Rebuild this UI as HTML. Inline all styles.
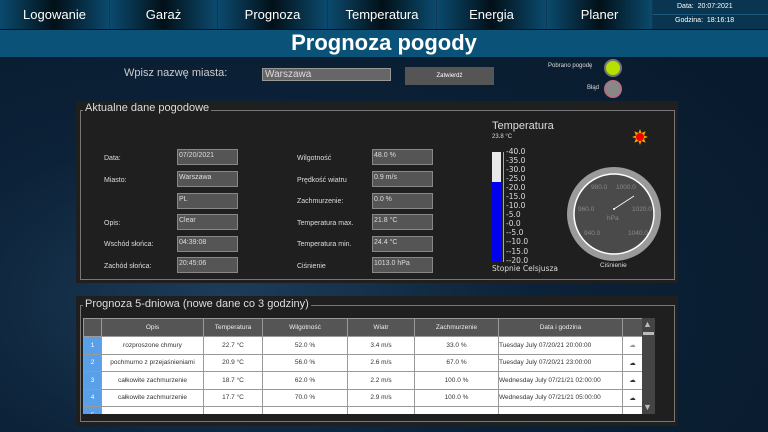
<!DOCTYPE html>
<html><head><meta charset="utf-8"><style>
*{margin:0;padding:0;box-sizing:border-box}
body{width:768px;height:432px;overflow:hidden;position:relative;font-family:"Liberation Sans",sans-serif;background:radial-gradient(ellipse at 30% 70%,#1d3d5a 0%,#0c2238 40%,#07182a 100%);color:#ddd}
.a{position:absolute}
.nav{left:0;top:0;width:768px;height:30px;background:#03121e}
.nc{position:absolute;top:0;height:29px;border-right:1px solid #0d3a55;background:linear-gradient(90deg,#0b4a6e 0%,#021018 50%,#0b4a6e 100%);color:#fff;font-size:13px;text-align:center;line-height:29px}
.band{left:0;top:30px;width:768px;height:27px;background:#0a5277;color:#fff;font-weight:bold;font-size:22px;text-align:center;line-height:26px}
.panel{background:#1f1f1f}
.fs{position:absolute;border:1px solid #777}
.lg{position:absolute;background:#1f1f1f;color:#ddd;font-size:11px;padding:0 2px}
.lb{position:absolute;font-size:7px;color:#ddd}
.bx{position:absolute;width:61px;height:16px;background:#555;border:1px solid #888;font-size:7px;color:#ddd;padding:2px 1px}
table{border-collapse:collapse;font-size:6.5px;color:#333}
td,th{border:1px solid #999;text-align:center;height:17.5px;padding:0}
th{background:#555;color:#eee;font-weight:normal;height:18px}
td.i{background:#5aa0e8;color:#fff}
td{background:#fff}
</style></head><body>
<div class="a nav">
<div class="nc" style="left:0;width:110px">Logowanie</div>
<div class="nc" style="left:110px;width:108px">Garaż</div>
<div class="nc" style="left:218px;width:110px">Prognoza</div>
<div class="nc" style="left:328px;width:109px">Temperatura</div>
<div class="nc" style="left:437px;width:110px">Energia</div>
<div class="nc" style="left:547px;width:106px">Planer</div>
<div class="a" style="left:653px;top:0;width:115px;height:29px;background:#0a3550;font-size:7px;color:#fff">
<div class="a" style="left:24px;top:3px">Data:&nbsp; 20:07:2021</div>
<div class="a" style="left:0;top:14px;width:115px;border-top:1px solid #1d5a7d"></div>
<div class="a" style="left:22px;top:17px">Godzina:&nbsp; 18:16:18</div></div>
</div>
<div class="a band">Prognoza pogody</div>
<div class="a" style="left:124px;top:67px;font-size:11px;color:#ccc">Wpisz nazwę miasta:</div>
<div class="a" style="left:262px;top:68px;width:129px;height:13px;background:#666;border:1px solid #999;font-size:10px;color:#ddd;padding-left:2px;line-height:11px">Warszawa</div>
<div class="a" style="left:405px;top:67px;width:89px;height:18px;background:#555;font-size:6px;color:#fff;text-align:center;line-height:18px">Zatwierdź</div>
<div class="a" style="left:548px;top:63px;font-size:6px;color:#ddd">Pobrano pogodę</div>
<div class="a" style="left:604px;top:59px;width:18px;height:18px;border-radius:50%;background:#b5e000;border:2px solid #777"></div>
<div class="a" style="left:587px;top:85px;font-size:6px;color:#ddd">Błąd</div>
<div class="a" style="left:604px;top:80px;width:18px;height:18px;border-radius:50%;background:#888;border:2px solid #b07080"></div>

<div class="a panel" style="left:76px;top:101px;width:602px;height:182px"></div>
<div class="fs" style="left:80px;top:110px;width:595px;height:170px"></div>
<div class="lg" style="left:83px;top:102px">Aktualne dane pogodowe</div>
<div class="lb" style="left:104px;top:155px">Data:</div>
<div class="lb" style="left:104px;top:177px">Miasto:</div>
<div class="lb" style="left:104px;top:220px">Opis:</div>
<div class="lb" style="left:104px;top:241px">Wschód słońca:</div>
<div class="lb" style="left:104px;top:263px">Zachód słońca:</div>
<div class="bx" style="left:177px;top:149px">07/20/2021</div>
<div class="bx" style="left:177px;top:171px">Warszawa</div>
<div class="bx" style="left:177px;top:193px">PL</div>
<div class="bx" style="left:177px;top:214px">Clear</div>
<div class="bx" style="left:177px;top:236px">04:39:08</div>
<div class="bx" style="left:177px;top:257px">20:45:06</div>
<div class="lb" style="left:297px;top:155px">Wilgotność</div>
<div class="lb" style="left:297px;top:177px">Prędkość wiatru</div>
<div class="lb" style="left:297px;top:198px">Zachmurzenie:</div>
<div class="lb" style="left:297px;top:220px">Temperatura max.</div>
<div class="lb" style="left:297px;top:241px">Temperatura min.</div>
<div class="lb" style="left:297px;top:263px">Ciśnienie</div>
<div class="bx" style="left:372px;top:149px">48.0 %</div>
<div class="bx" style="left:372px;top:171px">0.9 m/s</div>
<div class="bx" style="left:372px;top:193px">0.0 %</div>
<div class="bx" style="left:372px;top:214px">21.8 °C</div>
<div class="bx" style="left:372px;top:236px">24.4 °C</div>
<div class="bx" style="left:372px;top:257px">1013.0 hPa</div>

<div class="a" style="left:492px;top:120px;font-size:11px;color:#ddd">Temperatura</div>
<div class="a" style="left:492px;top:134px;font-size:6px;color:#ddd">23.8 °C</div>
<div class="a" style="left:492px;top:152px;width:9px;height:30px;background:#e8e8e8"></div>
<div class="a" style="left:492px;top:182px;width:9px;height:79px;background:#0000f0"></div>
<div class="a" style="left:503px;top:152px;width:1px;height:110px;background:#aaa"></div>
<div class="a" style="left:506px;top:147px;font-size:7.5px;line-height:9.05px;color:#ddd;font-family:'DejaVu Sans',sans-serif">-40.0<br>-35.0<br>-30.0<br>-25.0<br>-20.0<br>-15.0<br>-10.0<br>-5.0<br>-0.0<br>--5.0<br>--10.0<br>--15.0<br>--20.0</div>
<div class="a" style="left:492px;top:264px;font-size:7.5px;color:#ddd;font-family:'DejaVu Sans',sans-serif">Stopnie Celsjusza</div>
<svg class="a" style="left:560px;top:160px" width="110" height="110" viewBox="0 0 110 110">
<circle cx="54" cy="54" r="47" fill="#9a9a9a"/>
<circle cx="54" cy="54" r="40" fill="#4a4a4a" stroke="#fff" stroke-width="1.5"/>
<g font-size="6.5" fill="#888" font-family="Liberation Sans">
<text x="31" y="29">980.0</text><text x="56" y="29">1000.0</text>
<text x="18" y="51">960.0</text><text x="72" y="51">1020.0</text>
<text x="24" y="75">940.0</text><text x="68" y="75">1040.0</text>
<text x="47" y="60">hPa</text></g>
<line x1="54" y1="49" x2="74" y2="36" stroke="#fff" stroke-width="0.8"/>
<circle cx="54" cy="49" r="1" fill="#fff"/>
<text x="40" y="107" font-size="6.5" fill="#ddd" font-family="Liberation Sans">Ciśnienie</text>
</svg>
<svg class="a" style="left:632px;top:129px" width="16" height="16" viewBox="0 0 16 16">
<polygon points="8,0 9.5,4 13.7,2.3 12,6.5 16,8 12,9.5 13.7,13.7 9.5,12 8,16 6.5,12 2.3,13.7 4,9.5 0,8 4,6.5 2.3,2.3 6.5,4" fill="#f5a000"/>
<circle cx="8" cy="8" r="4" fill="#e00"/>
</svg>

<div class="a panel" style="left:76px;top:296px;width:602px;height:130px"></div>
<div class="fs" style="left:80px;top:305px;width:595px;height:117px"></div>
<div class="lg" style="left:83px;top:298px">Prognoza 5-dniowa (nowe dane co 3 godziny)</div>
<div class="a" style="left:83px;top:318px;width:572px;height:96px;overflow:hidden;background:#fff">
<table style="width:559px;table-layout:fixed">
<colgroup><col style="width:18px"><col style="width:102px"><col style="width:59px"><col style="width:85px"><col style="width:67px"><col style="width:84px"><col style="width:124px"><col style="width:20px"></colgroup>
<tr><th></th><th>Opis</th><th>Temperatura</th><th>Wilgotność</th><th>Wiatr</th><th>Zachmurzenie</th><th>Data i godzina</th><th></th></tr>
<tr><td class="i">1</td><td>rozproszone chmury</td><td>22.7 °C</td><td>52.0 %</td><td>3.4 m/s</td><td>33.0 %</td><td style="text-align:left">Tuesday July 07/20/21 20:00:00</td><td style="color:#999">☁</td></tr>
<tr><td class="i">2</td><td>pochmurno z przejaśnieniami</td><td>20.9 °C</td><td>56.0 %</td><td>2.6 m/s</td><td>67.0 %</td><td style="text-align:left">Tuesday July 07/20/21 23:00:00</td><td>☁</td></tr>
<tr><td class="i">3</td><td>całkowite zachmurzenie</td><td>18.7 °C</td><td>62.0 %</td><td>2.2 m/s</td><td>100.0 %</td><td style="text-align:left">Wednesday July 07/21/21 02:00:00</td><td>☁</td></tr>
<tr><td class="i">4</td><td>całkowite zachmurzenie</td><td>17.7 °C</td><td>70.0 %</td><td>2.9 m/s</td><td>100.0 %</td><td style="text-align:left">Wednesday July 07/21/21 05:00:00</td><td>☁</td></tr>
<tr><td class="i">5</td><td></td><td></td><td></td><td></td><td></td><td></td><td></td></tr>
</table>
<div class="a" style="left:559px;top:0;width:13px;height:96px;background:#444"></div>
<div class="a" style="left:560px;top:1px;font-size:9px;color:#bbb">▲</div>
<div class="a" style="left:560px;top:14px;width:11px;height:3px;background:#bbb"></div>
<div class="a" style="left:560px;top:84px;font-size:9px;color:#bbb">▼</div>
</div>
</body></html>
